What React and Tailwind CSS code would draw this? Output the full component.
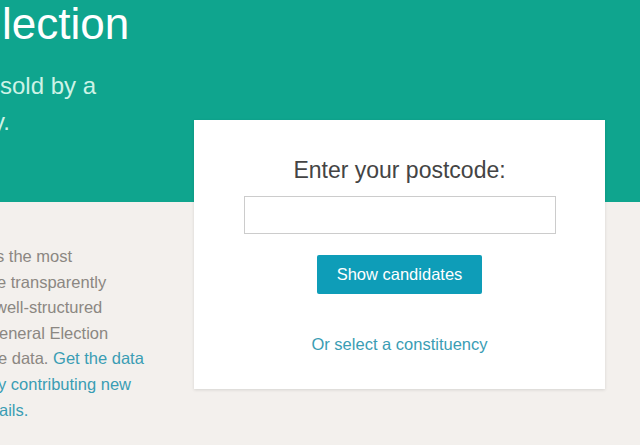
import { useState } from 'react'

// Body copy lines as they sit in the clipped left column (page is scrolled right)
const bodyLines = [
  { text: 's the most', shift: '-ml-[4px]' },
  { text: 'e transparently', shift: '-ml-[3px]' },
  { text: 'well-structured', shift: '-ml-[5px]' },
  { text: 'eneral Election', shift: '-ml-[1px]' },
]

const App = () => {
  const [postcode, setPostcode] = useState('')

  return (
    <div className="w-[640px] h-[445px] overflow-hidden bg-[#f3f0ed] font-['Liberation_Sans',Arial,sans-serif]">
      {/* Header band */}
      <div className="h-[202px] bg-[#0fa58e]">
        <div className="w-[180px] overflow-hidden">
          <h1 className="pl-[2px] text-[44px] leading-[1.1] text-white whitespace-nowrap">lection</h1>
          <div className="mt-[20px] text-[24px] leading-[1.5] text-[#cdf3e6] whitespace-nowrap">
            <div>sold by a</div>
            <div className="-ml-[7px]">y.</div>
          </div>
        </div>
      </div>

      {/* Body */}
      <div className="flex">
        <div className="w-[194px] shrink-0 overflow-hidden pt-[42px] text-[16.5px] leading-[25.6px] text-[#8b8782] whitespace-nowrap">
          {bodyLines.map((line) => (
            <div key={line.text} className={line.shift}>{line.text}</div>
          ))}
          <div className="-ml-[2px]">
            e data. <a href="#" className="text-[#3a9db4]">Get the data</a>
          </div>
          <div className="-ml-[2px] text-[#3a9db4]">y contributing new</div>
          <div className="-ml-[1px] text-[#3a9db4]">ails.</div>
        </div>

        {/* Postcode card */}
        <div className="-mt-[82px] w-[411px] h-[269px] shrink-0 bg-white shadow-[0_1px_3px_rgba(0,0,0,0.12)] flex flex-col items-center pt-[36px]">
          <label className="text-[23px] leading-[28px] text-[#444444]">Enter your postcode:</label>
          <input
            value={postcode}
            onChange={(e) => setPostcode(e.target.value)}
            className="mt-[12px] w-[312px] h-[38px] border border-[#cccccc] bg-white px-2 outline-none"
          />
          <button className="mt-[21px] w-[165px] h-[39px] rounded-[2px] bg-[#0e9db8] text-[16.5px] text-white">
            Show candidates
          </button>
          <a href="#" className="mt-[40px] text-[16.5px] leading-[20px] text-[#3a9db4]">
            Or select a constituency
          </a>
        </div>
      </div>
    </div>
  )
}

export default App
